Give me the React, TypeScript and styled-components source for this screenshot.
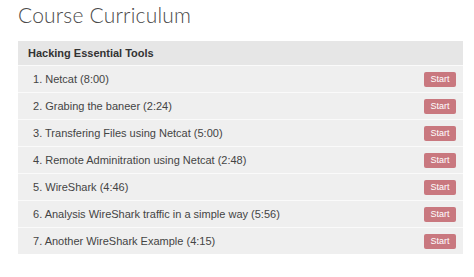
import * as React from 'react'
import styled, { createGlobalStyle } from 'styled-components'

const lessons = [
    'Netcat (8:00)',
    'Grabing the baneer (2:24)',
    'Transfering Files using Netcat (5:00)',
    'Remote Adminitration using Netcat (2:48)',
    'WireShark (4:46)',
    'Analysis WireShark traffic in a simple way (5:56)',
    'Another WireShark Example (4:15)',
]

const GlobalStyle = createGlobalStyle`
    body {
        margin: 0;
        background: #fff;
        font-family: "Liberation Sans", Arial, sans-serif;
    }
`

const Page = styled.div`
    width: 474px;
    height: 277px;
    padding: 0 11px 0 18px;
    box-sizing: border-box;
    overflow: hidden;
`

const Title = styled.h2`
    margin: 0;
    padding-top: 1px;
    height: 40px;
    font-family: Lato, "Open Sans", sans-serif;
    font-weight: 300;
    font-size: 21px;
    line-height: 27px;
    letter-spacing: 0.2px;
    color: #4a4a4a;
`

const Panel = styled.ol`
    margin: 0;
    padding: 0;
    list-style: none;
    display: flex;
    flex-direction: column;
    gap: 1px;
    background: #fafafa;
`

const PanelHeader = styled.li`
    height: 24px;
    background: #e6e6e6;
    display: flex;
    align-items: center;
    padding-left: 10px;
    font-size: 11px;
    font-weight: bold;
    color: #333;
`

const Row = styled.li`
    height: 26px;
    background: #efefef;
    display: flex;
    align-items: center;
    justify-content: space-between;
    padding: 0 7px 0 15px;
    font-size: 11px;
    color: #444;
`

const StartButton = styled.span`
    width: 32px;
    height: 15px;
    border-radius: 2px;
    background: #c9787f;
    color: #fff;
    font-size: 9px;
    display: flex;
    align-items: center;
    justify-content: center;
    cursor: pointer;
`

const App = () => (
    <Page>
        <GlobalStyle />
        <Title>Course Curriculum</Title>
        <Panel>
            <PanelHeader>Hacking Essential Tools</PanelHeader>
            {lessons.map((name, i) => (
                <Row key={i}>
                    <span>{i + 1}. {name}</span>
                    <StartButton>Start</StartButton>
                </Row>
            ))}
        </Panel>
    </Page>
)

export default App
